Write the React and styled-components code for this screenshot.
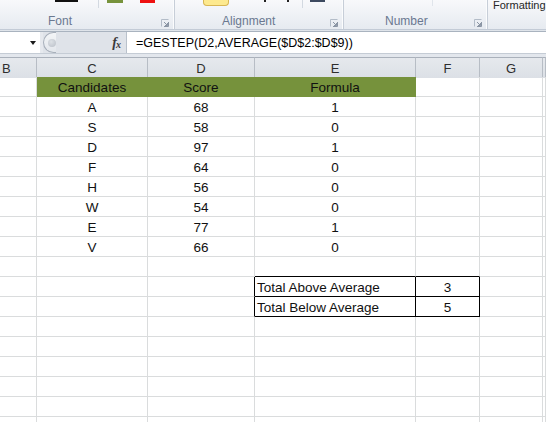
import React from 'react';
import styled, { createGlobalStyle } from 'styled-components';

const GlobalStyle = createGlobalStyle`
  html, body {
    margin: 0;
    padding: 0;
    background: #fff;
    overflow: hidden;
  }
  body {
    font-family: "Liberation Sans", Arial, sans-serif;
  }
`;

const GRID = '#dadcdd';
const GREEN = '#76923c';

const Window = styled.div`
  width: 546px;
  height: 422px;
  overflow: hidden;
  display: flex;
  flex-direction: column;
`;

/* ---------- ribbon ---------- */

const Ribbon = styled.div`
  height: 29px;
  flex: none;
  display: flex;
  background: linear-gradient(#f8f9fb, #eef1f5 55%, #e6eaf0);
  border-bottom: 1px solid #c3cbd6;
`;

const Group = styled.div`
  width: ${p => p.$w}px;
  flex: none;
  display: flex;
  flex-direction: column;
  justify-content: space-between;
  border-right: 1px solid #c7ced8;
  box-shadow: inset -1px 0 0 #fbfcfd;
`;

const GroupTop = styled.div`
  display: flex;
  align-items: flex-start;
  height: 8px;
`;

const Swatch = styled.div`
  flex: none;
  margin-left: ${p => p.$ml}px;
  width: ${p => p.$w}px;
  height: ${p => p.$h}px;
  background: ${p => p.$c};
  border-radius: ${p => (p.$round ? '0 0 4px 4px' : '0')};
  border: ${p => (p.$round ? '1px solid #d8b653' : 'none')};
  border-top: none;
`;

const GroupFooter = styled.div`
  display: flex;
  align-items: center;
  height: 14px;
  margin-bottom: 1px;
  padding-left: ${p => p.$pl}px;
  padding-right: 5px;
`;

const GroupLabel = styled.span`
  font-size: 12px;
  line-height: 14px;
  color: #6a7890;
`;

const Launcher = styled.svg`
  margin-left: auto;
  margin-top: 3px;
`;

const StyleButton = styled.div`
  flex: 1;
  min-width: 0;
`;

const StyleButtonText = styled.div`
  font-size: 11px;
  line-height: 12px;
  margin: -1px 0 0 5px;
  color: #262626;
  white-space: nowrap;
`;

/* ---------- formula bar ---------- */

const Spacer = styled.div`
  height: 1px;
  flex: none;
  background: #dfe4ea;
`;

const FormulaBar = styled.div`
  height: 21px;
  flex: none;
  display: flex;
  border-top: 1px solid #a9b3bf;
  border-bottom: 1px solid #c5ccd5;
  background: #fff;
`;

const NameBox = styled.div`
  width: 40px;
  display: flex;
  align-items: center;
  justify-content: flex-end;
  padding-right: 4px;
  box-sizing: border-box;
`;

const DropArrow = styled.div`
  width: 0;
  height: 0;
  border-left: 3.5px solid transparent;
  border-right: 3.5px solid transparent;
  border-top: 4px solid #1a1a1a;
`;

const FxZone = styled.div`
  width: 87px;
  display: flex;
  align-items: center;
  background: #dfe3e9;
  border-left: 3px solid #e6e9ee;
  border-right: 1px solid #b9c1cb;
  box-sizing: border-box;
`;

const Knob = styled.div`
  width: 13px;
  height: 21px;
  box-sizing: border-box;
  border: 1px solid #a7afba;
  border-right: none;
  border-radius: 11px 0 0 11px;
  background: linear-gradient(#f3f5f7, #e3e7ec);
  display: flex;
  align-items: center;
  padding-left: 4px;
`;

const KnobDot = styled.div`
  width: 8px;
  height: 8px;
  border-radius: 50%;
  background: radial-gradient(circle at 40% 35%, #dde1e6, #b9bfc7);
`;

const Fx = styled.span`
  margin-left: auto;
  margin-right: 6px;
  font-family: "Liberation Serif", "Times New Roman", serif;
  font-style: italic;
  font-weight: bold;
  font-size: 14px;
  color: #3a3a3a;
  letter-spacing: -1px;

  sub {
    font-size: 10px;
    vertical-align: -1px;
  }
`;

const FormulaInput = styled.div`
  flex: 1;
  padding: 2px 0 0 9px;
  font-size: 12.5px;
  line-height: 19px;
  color: #000;
  white-space: nowrap;
  overflow: hidden;
`;

const Strip = styled.div`
  height: 3px;
  flex: none;
  background: #e3e7ed;
`;

/* ---------- sheet ---------- */

const Sheet = styled.div`
  display: grid;
  grid-template-columns: 37px 111px 107px 161px 64px 63px 1fr;
  grid-auto-rows: 20px;
`;

const HeaderCell = styled.div`
  height: 21px;
  box-sizing: border-box;
  border-top: 1px solid #aab1bb;
  border-right: 1px solid #b7bdc5;
  background: linear-gradient(#e6e9ed, #dce0e6);
  font-size: 13px;
  line-height: 21px;
  color: #2e2e2e;
  overflow: hidden;
  text-align: ${p => p.$align || 'center'};
  padding-left: ${p => (p.$align === 'left' ? '2px' : '0')};
`;

const Cell = styled.div`
  box-sizing: border-box;
  border-right: 1px solid ${p => p.$rb || GRID};
  border-bottom: 1px solid ${p => p.$bb || GRID};
  background: ${p => p.$bg || 'transparent'};
  font-size: 13.5px;
  line-height: 22px;
  color: #111;
  white-space: nowrap;
  text-align: ${p => p.$align || 'center'};
  padding-left: ${p => (p.$align === 'left' ? '2px' : '0')};
`;

/* last column (H) is scrolled almost out of view, so its letter isn't shown */
const COLUMNS = ['B', 'C', 'D', 'E', 'F', 'G', ''];

const candidates = [
  ['A', 68, 1],
  ['S', 58, 0],
  ['D', 97, 1],
  ['F', 64, 0],
  ['H', 56, 0],
  ['W', 54, 0],
  ['E', 77, 1],
  ['V', 66, 0],
];

const summary = [
  ['Total Above Average', 3],
  ['Total Below Average', 5],
];

const blank = () => COLUMNS.map(() => ({}));

function buildRows() {
  const rows = [];

  const head = blank();
  ['Candidates', 'Score', 'Formula'].forEach((t, i) => {
    head[i + 1] = { text: t, bg: GREEN, rb: GREEN, bb: GREEN };
  });
  rows.push(head);

  candidates.forEach(([name, score, flag]) => {
    const r = blank();
    r[1] = { text: name };
    r[2] = { text: score };
    r[3] = { text: flag };
    rows.push(r);
  });

  const gap = blank();
  gap[3] = { bb: '#000' };
  gap[4] = { bb: '#000' };
  rows.push(gap);

  summary.forEach(([label, value]) => {
    const r = blank();
    r[2] = { rb: '#000' };
    r[3] = { text: label, align: 'left', rb: '#000', bb: '#000' };
    r[4] = { text: value, rb: '#000', bb: '#000' };
    rows.push(r);
  });

  for (let i = 0; i < 6; i++) rows.push(blank());
  return rows;
}

const LauncherIcon = () => (
  <Launcher width="8" height="8" viewBox="0 0 8 8">
    <path d="M0.5 7.5V0.5H7.5" fill="none" stroke="#b3bcc8" />
    <path d="M7.5 3V7.5H3" fill="none" stroke="#8a95a4" />
    <path d="M3 3L6.5 6.5M4 6.5H6.5V4" fill="none" stroke="#8a95a4" />
  </Launcher>
);

export default function App() {
  const rows = buildRows();

  return (
    <Window>
      <GlobalStyle />
      <Ribbon>
        <Group $w={174}>
          <GroupTop>
            <Swatch $ml={55} $w={23} $h={2} $c="#111" />
            <Swatch $ml={20} $w={1} $h={8} $c="#d3d9e1" />
            <Swatch $ml={8} $w={16} $h={3} $c="#77933c" />
            <Swatch $ml={17} $w={15} $h={3} $c="#ee1111" />
          </GroupTop>
          <GroupFooter $pl={48}>
            <GroupLabel>Font</GroupLabel>
            <LauncherIcon />
          </GroupFooter>
        </Group>
        <Group $w={168}>
          <GroupTop>
            <Swatch $ml={28} $w={24} $h={5} $c="#fde98e" $round />
            <Swatch $ml={35} $w={2} $h={2} $c="#222" />
            <Swatch $ml={21} $w={2} $h={2} $c="#222" />
            <Swatch $ml={13} $w={1} $h={8} $c="#d3d9e1" />
            <Swatch $ml={7} $w={15} $h={2} $c="#3d4a60" />
          </GroupTop>
          <GroupFooter $pl={47}>
            <GroupLabel>Alignment</GroupLabel>
            <LauncherIcon />
          </GroupFooter>
        </Group>
        <Group $w={143}>
          <GroupTop>
            <Swatch $ml={88} $w={1} $h={6} $c="#e0e5eb" />
          </GroupTop>
          <GroupFooter $pl={41}>
            <GroupLabel>Number</GroupLabel>
            <LauncherIcon />
          </GroupFooter>
        </Group>
        <StyleButton>
          <StyleButtonText>Formatting</StyleButtonText>
        </StyleButton>
      </Ribbon>
      <Spacer />
      <FormulaBar>
        <NameBox>
          <DropArrow />
        </NameBox>
        <FxZone>
          <Knob>
            <KnobDot />
          </Knob>
          <Fx>
            f<sub>x</sub>
          </Fx>
        </FxZone>
        <FormulaInput>=GESTEP(D2,AVERAGE($D$2:$D$9))</FormulaInput>
      </FormulaBar>
      <Strip />
      <Sheet>
        {COLUMNS.map((c, i) => (
          <HeaderCell key={i} $align={i === 0 ? 'left' : 'center'}>
            {c}
          </HeaderCell>
        ))}
        {rows.map((row, r) =>
          row.map((cell, c) => (
            <Cell
              key={`${r}-${c}`}
              $bg={cell.bg}
              $rb={cell.rb}
              $bb={cell.bb}
              $align={cell.align}
            >
              {cell.text}
            </Cell>
          ))
        )}
      </Sheet>
    </Window>
  );
}
